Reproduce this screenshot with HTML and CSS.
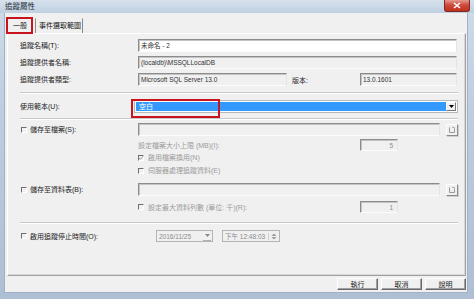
FILE: index.html
```html
<!DOCTYPE html>
<html lang="zh-Hant">
<head>
<meta charset="utf-8">
<link rel="stylesheet" href="styles.css">
</head>
<body>
<div class="window">
  <div class="titlebar">
    <span class="title">追蹤屬性</span>
    <span class="close"><svg width="8" height="7" viewBox="0 0 8 7"><path d="M1 1L7 6M7 1L1 6" stroke="#fff" stroke-width="1.6"/></svg></span>
  </div>
  <div class="client">
    <div class="tabs">
      <div class="tab active">一般</div>
      <div class="tab">事件選取範圍</div>
    </div>
    <div class="panel">
      <div class="row r1">
        <span class="label">追蹤名稱(T):</span>
        <span class="field white w-full">未命名 - 2</span>
      </div>
      <div class="row r2">
        <span class="label">追蹤提供者名稱:</span>
        <span class="field w-full">(localdb)\MSSQLLocalDB</span>
      </div>
      <div class="row r3">
        <span class="label">追蹤提供者類型:</span>
        <span class="field w-type">Microsoft SQL Server 13.0</span>
        <span class="label-ver">版本:</span>
        <span class="field w-ver">13.0.1601</span>
      </div>
      <div class="sep s1"></div>
      <div class="row r4">
        <span class="label">使用範本(U):</span>
        <span class="select"><span class="sel-text">空白</span><span class="drop"><svg width="5" height="3" viewBox="0 0 5 3"><path d="M0 0H5L2.5 3Z" fill="#000"/></svg></span></span>
      </div>
      <div class="sep s2"></div>
      <div class="row r5">
        <span class="label chk"><span class="box"></span>儲存至檔案(S):</span>
        <span class="field w-path"></span>
        <span class="browse"><svg width="6" height="6" viewBox="0 0 6 6"><path d="M0.5 0.5V5.5H5.5V2.5" stroke="#9a9a9a" fill="none"/><path d="M3 0.5H5.5V3" stroke="#b0b0b0" fill="none"/></svg></span>
      </div>
      <div class="row sub sub1">
        <span class="sublabel wide grey">設定檔案大小上限 (MB)(I):</span>
        <span class="field num">5</span>
      </div>
      <div class="row sub sub2">
        <span class="sublabel grey chk"><span class="box checked"><svg width="6" height="6" viewBox="0 0 6 6"><path d="M0.8 2.8L2.3 4.3L5.2 1.2" stroke="#a0a0a0" stroke-width="1" fill="none"/></svg></span>啟用檔案換用(N)</span>
      </div>
      <div class="row sub sub3">
        <span class="sublabel grey chk"><span class="box"></span>伺服器處理追蹤資料(E)</span>
      </div>
      <div class="row r6">
        <span class="label chk"><span class="box"></span>儲存至資料表(B):</span>
        <span class="field w-path"></span>
        <span class="browse"><svg width="6" height="6" viewBox="0 0 6 6"><path d="M0.5 0.5V5.5H5.5V2.5" stroke="#9a9a9a" fill="none"/><path d="M3 0.5H5.5V3" stroke="#b0b0b0" fill="none"/></svg></span>
      </div>
      <div class="row sub sub4">
        <span class="sublabel wide grey chk"><span class="box"></span>設定最大資料列數 (單位: 千)(R):</span>
        <span class="field num">1</span>
      </div>
      <div class="sep s3"></div>
      <div class="row r7">
        <span class="label chk"><span class="box"></span>啟用追蹤停止時間(O):</span>
        <span class="picker date"><span class="pk-text">2016/11/25</span><span class="pk-drop"><svg width="5" height="3" viewBox="0 0 5 3"><path d="M0 0H5L2.5 3Z" fill="#8a8a8a"/></svg></span></span>
        <span class="picker time"><span class="pk-text">下午 12:48:03</span><span class="spin"><svg width="6" height="3" viewBox="0 0 6 3"><path d="M0.5 3L3 0.5L5.5 3Z" fill="#9a9a9a"/></svg><svg width="6" height="3" viewBox="0 0 6 3"><path d="M0.5 0L3 2.5L5.5 0Z" fill="#9a9a9a"/></svg></span></span>
      </div>
    </div>
    <div class="buttons">
      <span class="btn">執行</span>
      <span class="btn">取消</span>
      <span class="btn">說明</span>
    </div>
  </div>
  <div class="mark mark-tab"></div>
  <div class="mark mark-select"></div>
</div>
</body>
</html>
```

FILE: styles.css
```css
html, body {
  margin: 0;
  padding: 0;
}
body {
  width: 474px;
  height: 299px;
  overflow: hidden;
  font-family: "Liberation Sans", "Noto Sans CJK TC", sans-serif;
  font-size: 7px;
  color: #222;
}
.window {
  position: relative;
  width: 474px;
  height: 299px;
  display: flex;
  flex-direction: column;
  background: linear-gradient(to bottom, #cfdbe8 0%, #bccde0 40%, #aebfd3 100%);
}
.titlebar {
  height: 13px;
  display: flex;
  align-items: flex-start;
  padding-left: 5px;
  padding-right: 4px;
  background: linear-gradient(to bottom, #d6e1ec, #c0d0e1);
}
.title {
  margin-top: 2px;
  font-size: 7.5px;
  line-height: 9px;
  color: #1e2a36;
}
.close {
  margin-left: auto;
  width: 26px;
  height: 12px;
  display: flex;
  align-items: center;
  justify-content: center;
  background: linear-gradient(to bottom, #e39a8e 0%, #cf4a3c 45%, #c0301f 100%);
  border: 1px solid #7a2a22;
  border-top: 0;
  border-radius: 0 0 3px 3px;
  box-sizing: border-box;
}
.client {
  flex: 1;
  margin: 0 6px 6px 4px;
  background: #f0f0f0;
  display: flex;
  flex-direction: column;
  border: 1px solid #9fb1c5;
  border-top: 0;
  box-sizing: border-box;
}
.tabs {
  display: flex;
  align-items: flex-end;
  height: 20px;
  padding-left: 1px;
  box-sizing: border-box;
}
.tab {
  height: 15px;
  line-height: 14px;
  padding: 0 4px;
  box-sizing: border-box;
  border-left: 1px solid #fff;
  border-top: 1px solid #fff;
  border-right: 1px solid #8a8a8a;
  white-space: nowrap;
  color: #111;
}
.tab.active {
  width: 27px;
  height: 17px;
  line-height: 15px;
  padding-left: 6px;
  margin-bottom: -1px;
  background: #f0f0f0;
  position: relative;
  z-index: 1;
}
.tab:not(.active) {
  width: 48px;
  margin-left: 2px;
  padding-left: 3px;
  border-left-color: #8a8a8a;
  border-top-color: transparent;
}
.panel {
  margin: 0 1px 0 2px;
  height: 243px;
  box-sizing: border-box;
  border-left: 1px solid #fff;
  border-top: 1px solid #fff;
  border-right: 1px solid #a0a0a0;
  border-bottom: 1px solid #a0a0a0;
  box-shadow: inset -1px -1px 0 #d8d8d8;
  display: flex;
  flex-direction: column;
  padding-left: 12px;
}
.row {
  display: flex;
  align-items: center;
  height: 13px;
  flex: none;
}
.r1 { margin-top: 5px; }
.r2, .r3 { margin-top: 4px; }
.r4 { margin-top: 6px; }
.r5 { margin-top: 3px; }
.sub { padding-left: 118px; }
.sub1 { margin-top: 3px; height: 12px; }
.r6 { margin-top: 6px; }
.sub4 { margin-top: 5px; height: 12px; }
.r7 { margin-top: 6px; height: 12px; }
.label {
  width: 118px;
  flex: none;
  white-space: nowrap;
  line-height: 9px;
}
.label.chk { margin-left: 1px; width: 117px; }
.chk {
  display: flex;
  align-items: center;
}
.box {
  width: 6px;
  height: 6px;
  flex: none;
  box-sizing: border-box;
  border-top: 1px solid #6e6e6e;
  border-left: 1px solid #6e6e6e;
  border-right: 1px solid #fff;
  border-bottom: 1px solid #fff;
  margin-right: 3px;
  position: relative;
}
.sub .box { margin-right: 4px; }
.box.checked svg {
  position: absolute;
  left: -1px;
  top: -1px;
}
.sublabel {
  white-space: nowrap;
  line-height: 9px;
  flex: none;
}
.sublabel.wide { width: 222px; }
.grey { color: #9b9b9b; }
.field {
  height: 13px;
  flex: none;
  box-sizing: border-box;
  border-top: 1px solid #8c8c8c;
  border-left: 1px solid #8c8c8c;
  border-right: 1px solid #e4e4e4;
  border-bottom: 1px solid #fcfcfc;
  box-shadow: inset 1px 1px 0 #c4c4c4;
  background: #f0f0f0;
  padding-left: 2px;
  line-height: 11px;
  font-size: 6.5px;
  white-space: nowrap;
  overflow: hidden;
  color: #333;
}
.field.white { background: #fff; }
.w-full { width: 319px; }
.w-type { width: 149px; }
.w-ver { width: 97px; }
.label-ver {
  width: 73px;
  flex: none;
  padding-left: 5px;
  box-sizing: border-box;
  white-space: nowrap;
}
.w-path { width: 302px; }
.num {
  height: 12px;
  width: 38px;
  text-align: right;
  padding-right: 4px;
  color: #8a8a8a;
}
.select {
  margin-left: -4px;
  width: 324px;
  height: 13px;
  flex: none;
  box-sizing: border-box;
  display: flex;
  align-items: center;
  padding: 1px;
  border: 1px solid #b8b8b8;
  background: #fff;
}
.sel-text {
  flex: 1;
  height: 100%;
  background: #3399ff;
  color: #fff;
  line-height: 9px;
  padding-left: 3px;
}
.drop {
  width: 10px;
  height: 9px;
  box-sizing: border-box;
  display: flex;
  align-items: center;
  justify-content: center;
  background: #f0f0f0;
  border: 1px solid #fff;
  border-right-color: #777;
  border-bottom-color: #777;
}
.browse {
  width: 12px;
  height: 12px;
  flex: none;
  margin-left: 6px;
  box-sizing: border-box;
  display: flex;
  align-items: center;
  justify-content: center;
  border: 1px solid #fff;
  border-right-color: #8a8a8a;
  border-bottom-color: #8a8a8a;
  box-shadow: 1px 1px 0 #cfcfcf;
}
.sep {
  height: 2px;
  flex: none;
  margin-right: 7px;
  border-top: 1px solid #c8c8c8;
  border-bottom: 1px solid #fff;
  box-sizing: border-box;
}
.s1 { margin-top: 6px; }
.s2 { margin-top: 5px; }
.s3 { margin-top: 9px; }
.picker {
  height: 12px;
  flex: none;
  box-sizing: border-box;
  display: flex;
  align-items: center;
  border: 1px solid #b4b4b4;
  background: #f0f0f0;
  color: #8a8a8a;
  font-size: 6.5px;
}
.picker.date { width: 57px; margin-left: 18px; }
.picker.time { width: 58px; margin-left: 9px; }
.pk-text {
  flex: 1;
  padding-left: 2px;
  white-space: nowrap;
  overflow: hidden;
}
.pk-drop {
  width: 8px;
  height: 8px;
  display: flex;
  align-items: center;
  justify-content: center;
  margin-right: 1px;
  border-bottom: 1px solid #b0b0b0;
}
.spin {
  width: 9px;
  display: flex;
  flex-direction: column;
  align-items: center;
  gap: 1px;
  margin-right: 1px;
  border-left: 1px solid #d0d0d0;
}
.buttons {
  display: flex;
  justify-content: flex-end;
  gap: 3px;
  margin-top: 2px;
  padding-right: 1px;
}
.btn {
  width: 41px;
  height: 12px;
  box-sizing: border-box;
  display: flex;
  align-items: center;
  justify-content: center;
  border: 1px solid #fff;
  border-right-color: #6a6a6a;
  border-bottom-color: #6a6a6a;
  box-shadow: inset -1px -1px 0 #a0a0a0;
  color: #222;
  font-size: 7px;
}
.mark {
  position: absolute;
  border: 2px solid #c8141e;
  box-sizing: border-box;
  z-index: 5;
}
.mark-tab { left: 6px; top: 17px; width: 27px; height: 17px; }
.mark-select { left: 131px; top: 99px; width: 89px; height: 19px; }
```
